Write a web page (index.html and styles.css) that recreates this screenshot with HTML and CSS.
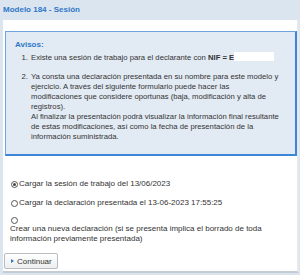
FILE: index.html
```html
<!DOCTYPE html>
<html lang="es">
<head>
<meta charset="utf-8">
<link rel="stylesheet" href="styles.css">
</head>
<body>
<div class="title">Modelo 184 - Sesión</div>
<div class="panel">
  <div class="notice">
    <div class="notice-title">Avisos:</div>
    <ol class="notice-list">
      <li>Existe una sesión de trabajo para el declarante con <b>NIF = E</b><span class="redact"></span></li>
      <li>Ya consta una declaración presentada en su nombre para este modelo y<br>ejercicio. A través del siguiente formulario puede hacer las<br>modificaciones que considere oportunas (baja, modificación y alta de<br>registros).<br>Al finalizar la presentación podrá visualizar la información final resultante<br>de estas modificaciones, así como la fecha de presentación de la<br>información suministrada.</li>
    </ol>
  </div>
  <div class="options">
    <label class="opt"><span class="radio checked"></span>Cargar la sesión de trabajo del 13/06/2023</label>
    <label class="opt"><span class="radio"></span>Cargar la declaración presentada el 13-06-2023 17:55:25</label>
    <label class="opt opt-block"><span class="radio"></span><span class="opt-text">Crear una nueva declaración (si se presenta implica el borrado de toda<br>información previamente presentada)</span></label>
  </div>
  <button class="btn"><span class="btn-arrow"></span>Continuar</button>
</div>
</body>
</html>
```
FILE: styles.css
```css
html, body { margin: 0; padding: 0; }
body {
  width: 300px;
  height: 275px;
  background: #dbe5ef;
  font-family: "Liberation Sans", Arial, sans-serif;
  font-size: 8px;
  color: #333;
  overflow: hidden;
}
.title {
  height: 20px;
  box-sizing: border-box;
  padding: 5px 0 0 3px;
  color: #2f77c8;
  font-weight: bold;
  font-size: 8px;
}
.panel {
  margin-left: 3px;
  width: 296px;
  height: 253px;
  background: #fff;
  border-right: 2px solid #e6e9ec;
  border-bottom: 2px solid #c4cbd3;
  padding-top: 11px;
  display: flex;
  flex-direction: column;
  box-sizing: border-box;
}
.notice {
  margin-left: 2px;
  width: 292px;
  box-sizing: border-box;
  background: #e2eaf3;
  border: 1px solid #6fa3dc;
  border-right: 2px solid #3b86d8;
  border-bottom: 2px solid #3b86d8;
  padding: 8px 4px 12px 9px;
  line-height: 10px;
  font-size: 7.7px;
  white-space: nowrap;
  overflow: hidden;
}
.notice-title {
  color: #2f77c8;
  font-weight: bold;
  font-size: 8px;
  margin-bottom: 2px;
}
.notice-list {
  margin: 0;
  padding-left: 15px;
}
.notice-list li { margin-bottom: 9px; padding-left: 1px; }
.notice-list li:last-child { margin-bottom: 0; }
.redact {
  display: inline-block;
  width: 40px;
  height: 9px;
  background: #fff;
  vertical-align: -1px;
}
.options {
  margin-top: 23px;
  padding-left: 8px;
  display: flex;
  flex-direction: column;
  gap: 9px;
  line-height: 10px;
}
.opt { display: flex; align-items: center; }
.opt-block { flex-direction: column; align-items: flex-start; margin-left: -1px; gap: 0; }
.opt-block .radio { margin-left: 1px; }
.radio {
  width: 5px;
  height: 5px;
  border: 1px solid #555;
  border-radius: 50%;
  margin-right: 1px;
  position: relative;
  flex: none;
  background: #fff;
}
.radio.checked::after {
  content: "";
  position: absolute;
  left: 1px; top: 1px;
  width: 3px; height: 3px;
  border-radius: 50%;
  background: #444;
}
.btn {
  margin: 9px 0 0 1px;
  align-self: flex-start;
  font-family: inherit;
  font-size: 8px;
  color: #333;
  height: 16px;
  width: 54px;
  padding: 0 0 0 6px;
  border: 1px solid #b8bcc0;
  border-radius: 2px;
  background: linear-gradient(#ffffff, #eceef0);
  display: flex;
  align-items: center;
  gap: 3px;
}
.btn-arrow {
  width: 0; height: 0;
  border-left: 3px solid #2f77c8;
  border-top: 2.5px solid transparent;
  border-bottom: 2.5px solid transparent;
}
```
